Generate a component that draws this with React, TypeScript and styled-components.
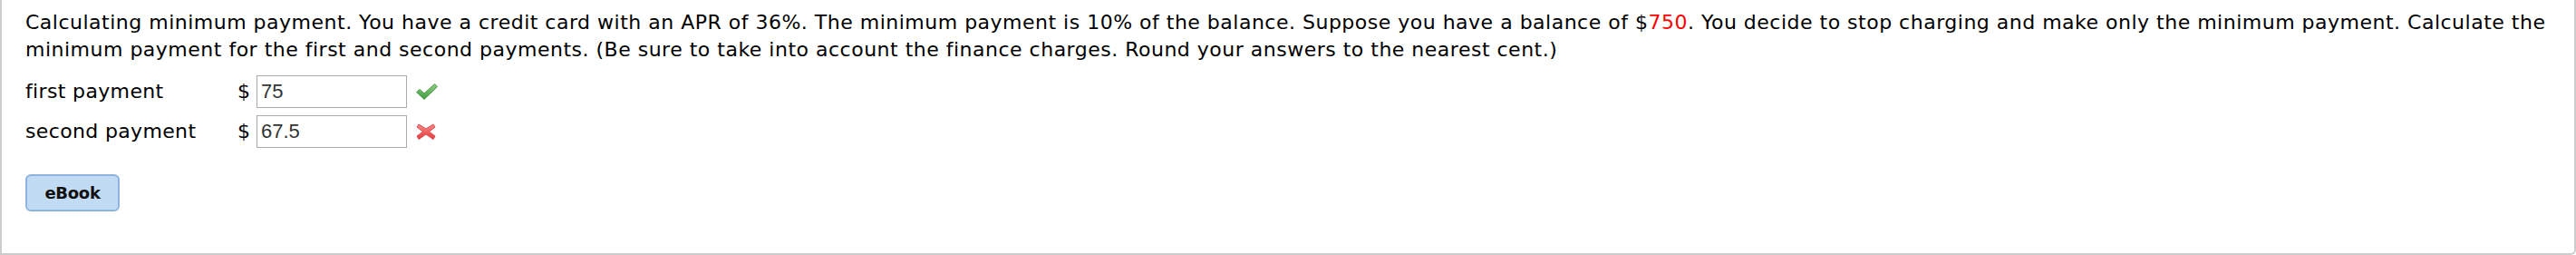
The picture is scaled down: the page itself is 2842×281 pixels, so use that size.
import React from 'react';
import styled, { createGlobalStyle } from 'styled-components';

const GlobalStyle = createGlobalStyle`
  html, body {
    margin: 0;
    padding: 0;
    background: #fff;
  }
`;

interface Answer {
  label: string;
  value: string;
  correct: boolean;
}

const answers: Answer[] = [
  { label: 'first payment', value: '75', correct: true },
  { label: 'second payment', value: '67.5', correct: false },
];

export default function App() {
  return (
    <>
      <GlobalStyle />
      <Panel>
        <Question>
          Calculating minimum payment. You have a credit card with an APR of 36%. The minimum payment is 10% of the
          balance. Suppose you have a balance of $<Highlight>750</Highlight>. You decide to stop charging and make only
          the minimum payment. Calculate the minimum payment for the first and second payments. (Be sure to take into
          account the finance charges. Round your answers to the nearest cent.)
        </Question>
        <AnswerList>
          {answers.map(({ label, value, correct }) => (
            <AnswerRow key={label}>
              <Label>{label}</Label>
              <Currency>$</Currency>
              <Field defaultValue={value} />
              {correct ? <CheckIcon /> : <CrossIcon />}
            </AnswerRow>
          ))}
        </AnswerList>
        <EBookButton type="button">eBook</EBookButton>
      </Panel>
    </>
  );
}

function CheckIcon() {
  return (
    <Icon width="26" height="20" viewBox="0 0 26 20">
      <defs>
        <linearGradient id="chk" x1="0" y1="0" x2="0" y2="1">
          <stop offset="0" stopColor="#8fd08a" />
          <stop offset="1" stopColor="#3f9a3c" />
        </linearGradient>
      </defs>
      <path
        d="M1.5 10.5 L5 7.5 L10 12 L21.5 1.5 L24.5 4.5 L10 18.5 Z"
        fill="url(#chk)"
        stroke="#4a9c46"
        strokeWidth="1"
        strokeLinejoin="round"
      />
    </Icon>
  );
}

function CrossIcon() {
  return (
    <Icon width="24" height="22" viewBox="0 0 24 22">
      <defs>
        <linearGradient id="crs" x1="0" y1="0" x2="0" y2="1">
          <stop offset="0" stopColor="#ff8a8a" />
          <stop offset="1" stopColor="#e23a3a" />
        </linearGradient>
      </defs>
      <path
        d="M4 3 L12 8 L20 3 L22 6 L15.5 11 L22 16 L20 19.5 L12 14 L4 19.5 L2 16 L8.5 11 L2 6 Z"
        fill="url(#crs)"
        stroke="#e04848"
        strokeWidth="1"
        strokeLinejoin="round"
      />
    </Icon>
  );
}

const Panel = styled.div`
  box-sizing: border-box;
  width: 2842px;
  height: 281px;
  padding: 10px 0 0 26px;
  border: 2px solid #cccccc;
  border-top: none;
  border-bottom-right-radius: 6px;
  background: #fff;
  font-family: 'DejaVu Sans', Verdana, sans-serif;
  font-size: 22px;
  line-height: 30px;
  color: #000;
`;

const Question = styled.p`
  margin: 0;
  letter-spacing: 0.5px;
`;

const Highlight = styled.span`
  color: #ff0000;
`;

const AnswerList = styled.div`
  display: flex;
  flex-direction: column;
  gap: 8px;
  margin-top: 13px;
`;

const AnswerRow = styled.div`
  display: flex;
  align-items: center;
  height: 36px;
  letter-spacing: 0.35px;
`;

const Label = styled.span`
  width: 234px;
`;

const Currency = styled.span`
  width: 21px;
`;

const Field = styled.input`
  box-sizing: border-box;
  width: 166px;
  height: 36px;
  margin: 0;
  padding: 0 4px;
  border: 1px solid #aaaaaa;
  font-family: 'Liberation Sans', Arial, sans-serif;
  font-size: 22px;
  letter-spacing: 0;
  color: #333;
  outline: none;
`;

const Icon = styled.svg`
  margin-left: 9px;
  display: block;
`;

const EBookButton = styled.button`
  display: block;
  box-sizing: border-box;
  width: 104px;
  height: 41px;
  margin-top: 29px;
  padding: 0;
  border: 2px solid #8eb2e2;
  border-radius: 6px;
  background: #c2dbf5;
  font-family: 'DejaVu Sans', Verdana, sans-serif;
  font-weight: bold;
  font-size: 18px;
  color: #111;
  letter-spacing: -0.3px;
`;
